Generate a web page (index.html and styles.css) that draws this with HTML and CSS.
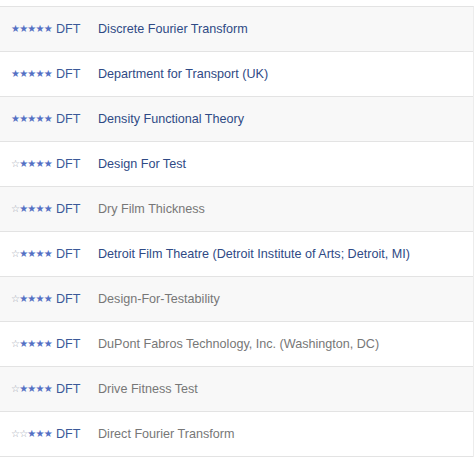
FILE: index.html
```html
<!DOCTYPE html>
<html>
<head>
<meta charset="utf-8">
<link rel="stylesheet" href="styles.css">
</head>
<body>
<ul class="list">
  <li class="row alt"><span class="stars">★★★★★</span><span class="abbr">DFT</span><span class="term link">Discrete Fourier Transform</span></li>
  <li class="row"><span class="stars">★★★★★</span><span class="abbr">DFT</span><span class="term link">Department for Transport (UK)</span></li>
  <li class="row alt"><span class="stars">★★★★★</span><span class="abbr">DFT</span><span class="term link">Density Functional Theory</span></li>
  <li class="row"><span class="stars"><span class="off">☆</span>★★★★</span><span class="abbr">DFT</span><span class="term link">Design For Test</span></li>
  <li class="row alt"><span class="stars"><span class="off">☆</span>★★★★</span><span class="abbr">DFT</span><span class="term">Dry Film Thickness</span></li>
  <li class="row"><span class="stars"><span class="off">☆</span>★★★★</span><span class="abbr">DFT</span><span class="term link">Detroit Film Theatre (Detroit Institute of Arts; Detroit, MI)</span></li>
  <li class="row alt"><span class="stars"><span class="off">☆</span>★★★★</span><span class="abbr">DFT</span><span class="term">Design-For-Testability</span></li>
  <li class="row"><span class="stars"><span class="off">☆</span>★★★★</span><span class="abbr">DFT</span><span class="term">DuPont Fabros Technology, Inc. (Washington, DC)</span></li>
  <li class="row alt"><span class="stars"><span class="off">☆</span>★★★★</span><span class="abbr">DFT</span><span class="term">Drive Fitness Test</span></li>
  <li class="row"><span class="stars"><span class="off">☆☆</span>★★★</span><span class="abbr">DFT</span><span class="term">Direct Fourier Transform</span></li>
</ul>
</body>
</html>
```
FILE: styles.css
```css
html, body {
  margin: 0;
  padding: 0;
  background: #ffffff;
}
body {
  font-family: "Liberation Sans", Arial, sans-serif;
  font-size: 12.6px;
}
.list {
  list-style: none;
  margin: 6px 0 0 0;
  padding: 0;
  width: 473px;
  border-top: 1px solid #e3e3e3;
  border-right: 1px solid #ececec;
}
.row {
  display: flex;
  align-items: center;
  height: 44px;
  border-bottom: 1px solid #e3e3e3;
  background: #ffffff;
}
.row.alt {
  background: #f8f8f8;
}
.stars {
  margin-left: 11px;
  width: 45px;
  font-family: "DejaVu Sans", sans-serif;
  font-size: 10px;
  color: #5470c4;
  letter-spacing: -0.8px;
  white-space: nowrap;
  position: relative;
  top: -1px;
}
.stars .off {
  color: #a0a6b4;
}
.abbr {
  width: 42px;
  color: #3b5998;
}
.term {
  color: #777777;
}
.term.link {
  color: #2f4a85;
}
```
